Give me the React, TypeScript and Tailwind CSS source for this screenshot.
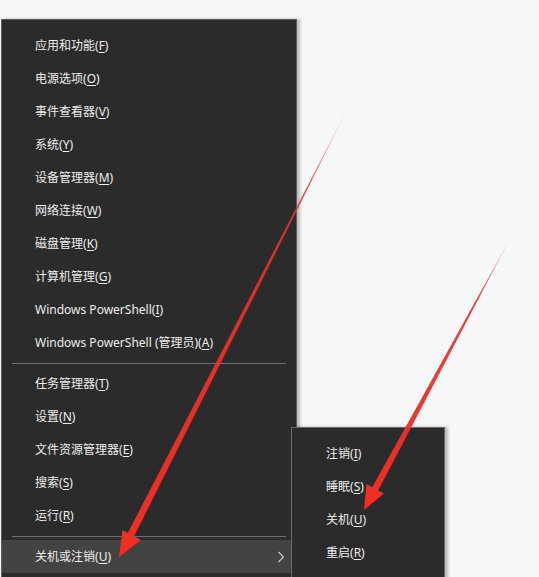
import React from 'react';

type Item = { label: string; key: string; sep?: boolean };

const mainItems: Item[][] = [
  [
    { label: '应用和功能', key: 'F' },
    { label: '电源选项', key: 'O' },
    { label: '事件查看器', key: 'V' },
    { label: '系统', key: 'Y' },
    { label: '设备管理器', key: 'M' },
    { label: '网络连接', key: 'W' },
    { label: '磁盘管理', key: 'K' },
    { label: '计算机管理', key: 'G' },
    { label: 'Windows PowerShell', key: 'I' },
    { label: 'Windows PowerShell (管理员)', key: 'A' },
  ],
  [
    { label: '任务管理器', key: 'T' },
    { label: '设置', key: 'N' },
    { label: '文件资源管理器', key: 'E' },
    { label: '搜索', key: 'S' },
    { label: '运行', key: 'R' },
  ],
];

const subItems: Item[] = [
  { label: '注销', key: 'I' },
  { label: '睡眠', key: 'S' },
  { label: '关机', key: 'U' },
  { label: '重启', key: 'R' },
];

const font = { fontFamily: '"Noto Sans", "Noto Sans CJK SC", sans-serif' };

function Label({ item }: { item: Item }) {
  return (
    <span className="text-[12px] text-[#ededed] leading-none whitespace-nowrap" style={font}>
      {item.label}(<span className="underline underline-offset-2 decoration-1">{item.key}</span>)
    </span>
  );
}

function Row({ item, pad, active, chevron }: { item: Item; pad: string; active?: boolean; chevron?: boolean }) {
  return (
    <div className={`h-[33px] flex items-center justify-between ${pad} pr-[10px] ${active ? 'bg-[#434343]' : ''}`}>
      <Label item={item} />
      {chevron && (
        <svg width="8" height="12" viewBox="0 0 8 12" className="mr-[1px]">
          <path d="M1.5 1 L6.5 6 L1.5 11" fill="none" stroke="#cfcfcf" strokeWidth="1.1" />
        </svg>
      )}
    </div>
  );
}

function Separator() {
  return (
    <div className="h-[8px] flex items-center px-[10px]">
      <div className="h-px w-full bg-[#6e6e6e]" />
    </div>
  );
}

export default function App() {
  return (
    <div className="relative w-[539px] h-[577px] overflow-hidden bg-[#f6f7f9]">
      {/* Win+X menu */}
      <div className="ml-[1px] mt-[19px] w-[296px] bg-[#2b2b2b] border border-[#5e5e5e] shadow-[3px_0_3px_rgba(0,0,0,0.25)] pt-[9px] pb-[4px]">
        {mainItems[0].map((it) => (
          <Row key={it.label} item={it} pad="pl-[33px]" />
        ))}
        <Separator />
        {mainItems[1].map((it) => (
          <Row key={it.label} item={it} pad="pl-[33px]" />
        ))}
        <Separator />
        <Row item={{ label: '关机或注销', key: 'U' }} pad="pl-[33px]" active chevron />
      </div>

      {/* Shutdown submenu */}
      <div className="absolute left-[291px] top-[427px] w-[154px] h-[160px] bg-[#2b2b2b] border border-[#6a6a6a] shadow-[3px_0_3px_rgba(0,0,0,0.25)] pt-[9px]">
        {subItems.map((it) => (
          <Row key={it.label} item={it} pad="pl-[34px]" />
        ))}
      </div>

      {/* red annotation arrows */}
      <svg className="absolute inset-0 pointer-events-none" width="539" height="577" viewBox="0 0 539 577">
        <defs>
          <linearGradient id="fade1" x1="349" y1="106" x2="130" y2="536" gradientUnits="userSpaceOnUse">
            <stop offset="0" stopColor="#e8312a" stopOpacity="0.15" />
            <stop offset="0.2" stopColor="#e8312a" stopOpacity="0.9" />
            <stop offset="1" stopColor="#ee2f25" />
          </linearGradient>
          <linearGradient id="fade2" x1="511" y1="237" x2="373" y2="490" gradientUnits="userSpaceOnUse">
            <stop offset="0" stopColor="#e8312a" stopOpacity="0.15" />
            <stop offset="0.25" stopColor="#e8312a" stopOpacity="0.9" />
            <stop offset="1" stopColor="#ee2f25" />
          </linearGradient>
        </defs>
        <polygon points="349,106 133.2,538 126.8,534.8" fill="url(#fade1)" />
        <polygon points="119,557 122.5,530 141,540" fill="#ee2f25" />
        <polygon points="511,237 376,494.5 370,491.3" fill="url(#fade2)" />
        <polygon points="364,510 366.5,484 384,493.5" fill="#ee2f25" />
      </svg>
    </div>
  );
}
